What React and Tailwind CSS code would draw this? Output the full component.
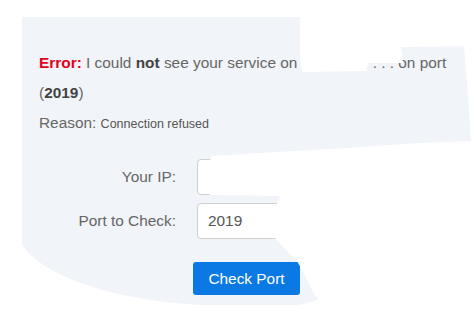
import React from 'react';

// white redaction strokes painted over the panel
const Redaction = () => (
  <svg className="absolute inset-0 pointer-events-none" width="474" height="315" viewBox="0 0 474 315">
    <path d="M300,0 H474 V46 L401,47 L403,63 L368,63 L366,71 L302,72 L300,60 Z" fill="#ffffff" />
    <path d="M464,46 H474 V142 H471 C469,110 467,80 464,46 Z" fill="#ffffff" />
    <path
      d="M474,141 L420,143 L330,149 L260,153 L212,156 C207,165 206,185 210,195 L281,196 L277,202 L275,238 L288,252 L297,261 L301,268 L313,292 L318,300 L300,305 L200,305 C140,302 80,288 45,266 C32,257 26,251 22,245 L0,245 V315 H474 Z"
      fill="#ffffff"
    />
  </svg>
);

export default function App() {
  return (
    <div className="relative w-[474px] h-[315px] overflow-hidden bg-white font-['Liberation_Sans',Arial,sans-serif]">
      <div className="ml-[22px] mt-[17px] h-[298px] bg-[#f1f4f8] pl-[17px] pr-[12px] pt-[31px]">
        <p className="text-[15.4px] leading-[30px] text-[#666]">
          <span className="font-bold text-[#e3001b]">Error:</span> I could{' '}
          <span className="font-bold text-[#444]">not</span> see your service on{' '}
          <span className="inline-block w-[71px]"></span>. . . on port (<span className="font-bold text-[#444]">2019</span>)
        </p>
        <p className="text-[15.4px] leading-[30px] text-[#666]">
          Reason: <span className="text-[12.5px] text-[#555]">Connection refused</span>
        </p>

        <form className="mt-[20px]" onSubmit={(e) => e.preventDefault()}>
          <div className="grid grid-cols-[137px_170px] gap-x-[21px] gap-y-[8px] items-center">
            <label className="text-right text-[15.4px] text-[#666]">Your IP:</label>
            <input
              type="text"
              readOnly
              value=""
              className="h-[36px] rounded-[4px] border border-[#cfcfcf] bg-white px-[10px] text-[15.4px] text-[#555] outline-none"
            />
            <label className="text-right text-[15.4px] text-[#666]">Port to Check:</label>
            <input
              type="text"
              readOnly
              value="2019"
              className="h-[36px] rounded-[4px] border border-[#cfcfcf] bg-white px-[10px] text-[15.4px] text-[#555] outline-none"
            />
          </div>
          <button
            type="submit"
            className="mt-[23px] ml-[154px] h-[33px] w-[107px] rounded-[3px] bg-[#0b79e3] text-[15.4px] text-white"
          >
            Check Port
          </button>
        </form>
      </div>
      <Redaction />
    </div>
  );
}
